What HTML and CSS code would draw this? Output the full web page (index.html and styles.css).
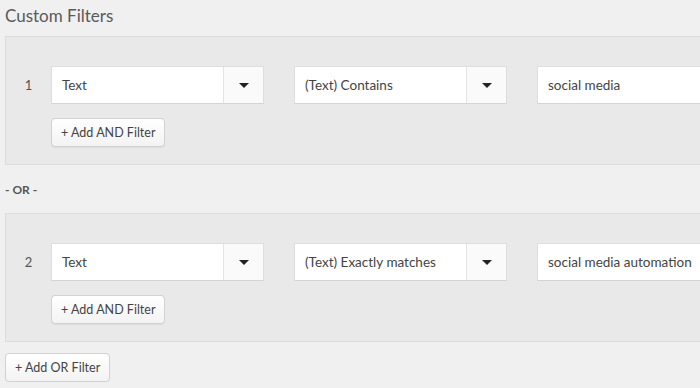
FILE: index.html
```html
<!DOCTYPE html>
<html lang="en">
<head>
  <meta charset="UTF-8">
  <title>Custom Filters</title>
  <link rel="stylesheet" href="styles.css">
</head>
<body>
  <div class="page">
    <h1>Custom Filters</h1>

    <!-- OR group 1 -->
    <div class="group">
      <div class="filter-row">
        <span class="num">1</span>
        <div class="select">
          <span class="value">Text</span>
          <span class="arrow"><i></i></span>
        </div>
        <div class="select">
          <span class="value">(Text) Contains</span>
          <span class="arrow"><i></i></span>
        </div>
        <div class="field">social media</div>
      </div>
      <button class="btn and-btn">+ Add AND Filter</button>
    </div>

    <div class="or-label">- OR -</div>

    <!-- OR group 2 -->
    <div class="group">
      <div class="filter-row">
        <span class="num">2</span>
        <div class="select">
          <span class="value">Text</span>
          <span class="arrow"><i></i></span>
        </div>
        <div class="select">
          <span class="value">(Text) Exactly matches</span>
          <span class="arrow"><i></i></span>
        </div>
        <div class="field">social media automation</div>
      </div>
      <button class="btn and-btn">+ Add AND Filter</button>
    </div>

    <button class="btn or-btn">+ Add OR Filter</button>
  </div>
</body>
</html>
```

FILE: styles.css
```css
body {
  margin: 0;
  background: #f0f0f0;
  font-family: Lato, "Open Sans", sans-serif;
  color: #444;
  overflow: hidden;
}

.page {
  padding-left: 5px;
  width: 760px;
}

h1 {
  margin: 0 0 8px;
  padding-top: 4px;
  font-size: 17px;
  line-height: 24px;
  font-weight: normal;
  color: #5a5a5a;
}

/* one OR group */
.group {
  background: #e9e9e9;
  border: 1px solid #dcdcdc;
  padding: 29px 0 17px;
}

.filter-row {
  display: flex;
  align-items: center;
  gap: 30px;
  height: 38px;
}

.num {
  width: 45px;
  margin-right: -30px;
  text-align: center;
  font-size: 13px;
  color: #555;
}

.select {
  display: flex;
  width: 211px;
  height: 36px;
  background: #fff;
  border: 1px solid #dedede;
  border-bottom-color: #d4d4d4;
  font-size: 13.5px;
}

.select .value {
  flex: 1;
  padding-left: 10px;
  line-height: 36px;
}

.select .arrow {
  width: 39px;
  background: #fafafa;
  border-left: 1px solid #e4e4e4;
  display: flex;
  align-items: center;
  justify-content: center;
}

.select .arrow i {
  width: 0;
  height: 0;
  border-left: 5px solid transparent;
  border-right: 5px solid transparent;
  border-top: 5px solid #222;
}

.field {
  width: 200px;
  height: 36px;
  line-height: 36px;
  padding-left: 10px;
  background: #fff;
  border: 1px solid #dedede;
  border-bottom-color: #d4d4d4;
  font-size: 13.5px;
}

.btn {
  height: 29px;
  padding: 0 9px;
  font-family: Lato, "Open Sans", sans-serif;
  font-size: 12.5px;
  color: #444;
  background: linear-gradient(#ffffff, #f3f3f3);
  border: 1px solid #d2d2d2;
  border-radius: 4px;
  box-shadow: 0 1px 1px rgba(0, 0, 0, 0.06);
  cursor: pointer;
}

.and-btn {
  margin: 14px 0 0 45px;
}

.or-label {
  margin: 16px 0 15px;
  font-size: 12px;
  line-height: 17px;
  font-weight: bold;
  color: #555;
}

.or-btn {
  margin-top: 11px;
}
```
